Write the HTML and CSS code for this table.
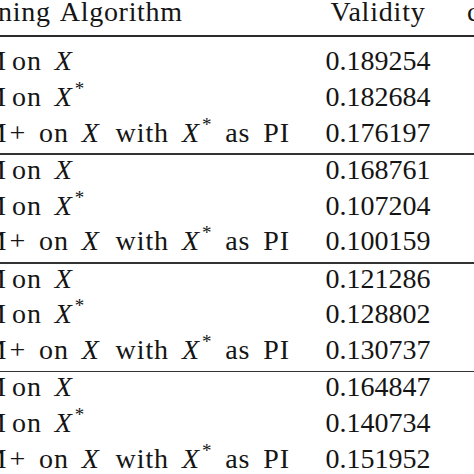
FILE: index.html
```html
<!DOCTYPE html>
<html>
<head>
<meta charset="utf-8">
<link rel="stylesheet" href="styles.css">
</head>
<body>
<div class="frame">
  <div class="tbl">
    <div class="row head">
      <div class="c1 hl">Learning Algorithm</div>
      <div class="c2 hv">Validity</div>
      <div class="c3">coverage</div>
    </div>
    <div class="rule thick"></div>
    <div class="group first">
      <div class="row"><div class="c1"><span class="m">SVM </span>on <i class="x">X</i></div><div class="c2">0.189254</div></div>
      <div class="row"><div class="c1"><span class="m">SVM </span>on <i class="x">X</i><span class="st">*</span></div><div class="c2">0.182684</div></div>
      <div class="row"><div class="c1">SVM<span class="plus">+</span> on <i class="x">X</i> with <i class="x">X</i><span class="st">*</span> as PI</div><div class="c2">0.176197</div></div>
    </div>
    <div class="rule"></div>
    <div class="group">
      <div class="row"><div class="c1"><span class="m">SVM </span>on <i class="x">X</i></div><div class="c2">0.168761</div></div>
      <div class="row"><div class="c1"><span class="m">SVM </span>on <i class="x">X</i><span class="st">*</span></div><div class="c2">0.107204</div></div>
      <div class="row"><div class="c1">SVM<span class="plus">+</span> on <i class="x">X</i> with <i class="x">X</i><span class="st">*</span> as PI</div><div class="c2">0.100159</div></div>
    </div>
    <div class="rule"></div>
    <div class="group">
      <div class="row"><div class="c1"><span class="m">SVM </span>on <i class="x">X</i></div><div class="c2">0.121286</div></div>
      <div class="row"><div class="c1"><span class="m">SVM </span>on <i class="x">X</i><span class="st">*</span></div><div class="c2">0.128802</div></div>
      <div class="row"><div class="c1">SVM<span class="plus">+</span> on <i class="x">X</i> with <i class="x">X</i><span class="st">*</span> as PI</div><div class="c2">0.130737</div></div>
    </div>
    <div class="rule"></div>
    <div class="group">
      <div class="row"><div class="c1"><span class="m">SVM </span>on <i class="x">X</i></div><div class="c2">0.164847</div></div>
      <div class="row"><div class="c1"><span class="m">SVM </span>on <i class="x">X</i><span class="st">*</span></div><div class="c2">0.140734</div></div>
      <div class="row"><div class="c1">SVM<span class="plus">+</span> on <i class="x">X</i> with <i class="x">X</i><span class="st">*</span> as PI</div><div class="c2">0.151952</div></div>
    </div>
  </div>
</div>
</body>
</html>
```
FILE: styles.css
```css
html, body {
  margin: 0;
  padding: 0;
  background: #ffffff;
}
.frame {
  width: 474px;
  height: 474px;
  overflow: hidden;
  position: relative;
}
.tbl {
  margin-left: -56px;
  width: 600px;
  font-family: "Liberation Serif", "Times New Roman", serif;
  font-size: 28px;
  color: #151515;
}
.row {
  display: grid;
  grid-template-columns: 381px 106px 1fr;
  line-height: 30.7px;
  padding-bottom: 5.1px;
  white-space: nowrap;
}
.row.head {
  line-height: 23.1px;
  padding-bottom: 11.9px;
}
.c1 {
  letter-spacing: 0.9px;
  word-spacing: 5px;
}
.m {
  letter-spacing: 0.6px;
  word-spacing: -2px;
}
.hl {
  letter-spacing: 0.7px;
  word-spacing: 3px;
}
.c2 {
  text-align: center;
}
.hv {
  letter-spacing: 0.8px;
}
.c3 {
  padding-left: 36px;
}
.x {
  font-style: italic;
  padding-right: 3px;
}
.st {
  font-size: 19px;
  line-height: 0;
  vertical-align: 11px;
  margin-left: -1px;
}
.plus {
  margin-left: 2px;
}
.group.first {
  padding-top: 9px;
}
.rule {
  height: 1.4px;
  background: #333333;
}
.rule.thick {
  height: 2px;
  background: #2a2a2a;
}
```
